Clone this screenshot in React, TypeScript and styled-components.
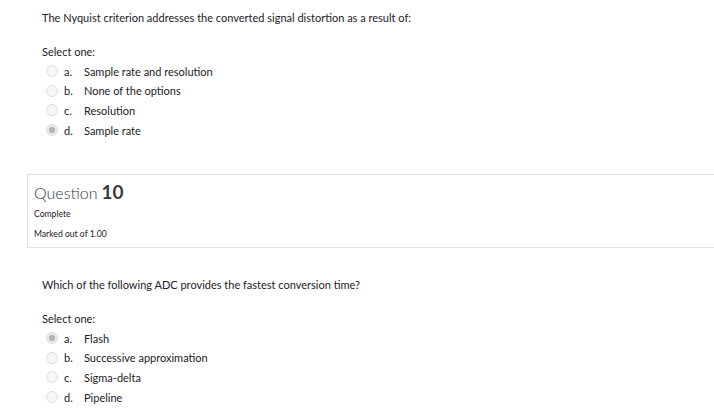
import React from "react";
import styled, { createGlobalStyle } from "styled-components";

const Global = createGlobalStyle`
  html, body { margin: 0; padding: 0; background: #fff; }
  body { font-family: Lato, "Open Sans", sans-serif; color: #1d2125; }
  * { box-sizing: border-box; }
`;

const Page = styled.div`
  display: flex;
  flex-direction: column;
  width: 714px;
  height: 415px;
  overflow: hidden;
`;

const QuestionBlock = styled.div<{ $top: number }>`
  display: flex;
  flex-direction: column;
  padding: ${(p) => p.$top}px 0 0 42px;
`;

const Prompt = styled.div`
  font-size: 11px;
  line-height: 14px;
  margin-bottom: 20px;
`;

const SelectLabel = styled.div`
  font-size: 11px;
  line-height: 14px;
  margin-bottom: 5px;
`;

const Options = styled.div`
  display: flex;
  flex-direction: column;
  gap: 5.7px;
  padding-left: 4px;
`;

const Option = styled.div`
  display: flex;
  align-items: center;
  height: 14px;
  font-size: 11px;
`;

const Radio = styled.span<{ $checked?: boolean }>`
  width: 12px;
  height: 12px;
  border-radius: 50%;
  border: 1px solid #dcdfe2;
  background: ${(p) => (p.$checked ? "radial-gradient(circle, #b4b7ba 0 3px, #e8e9ea 3.5px)" : "#f5f6f7")};
  margin-right: 6px;
  flex: none;
`;

const Letter = styled.span`
  width: 20px;
`;

const InfoBox = styled.div`
  margin: 0 0 0 27px;
  height: 74px;
  border: 1px solid #dee2e6;
  border-right: none;
  padding: 6px 6px;
  display: flex;
  flex-direction: column;
`;

const QTitle = styled.div`
  font-size: 16px;
  font-weight: 300;
  line-height: 22px;
  color: #343a40;
  display: flex;
  align-items: baseline;
  gap: 4px;
`;

const QNum = styled.span`
  font-size: 19px;
  font-weight: 700;
`;

const Meta = styled.div`
  font-size: 8.6px;
  line-height: 11px;
  margin-top: 5px;
  color: #1d2125;
`;

const Meta2 = styled(Meta)`
  margin-top: 9px;
`;

const Spacer = styled.div<{ $h: number }>`
  height: ${(p) => p.$h}px;
  flex: none;
`;

type Q = { prompt: string; options: string[]; checked: number };

const q1: Q = {
  prompt: "The Nyquist criterion addresses the converted signal distortion as a result of:",
  options: ["Sample rate and resolution", "None of the options", "Resolution", "Sample rate"],
  checked: 3,
};
const q2: Q = {
  prompt: "Which of the following ADC provides the fastest conversion time?",
  options: ["Flash", "Successive approximation", "Sigma-delta", "Pipeline"],
  checked: 0,
};

const letters = ["a.", "b.", "c.", "d."];

function Question({ q, top }: { q: Q; top: number }) {
  return (
    <QuestionBlock $top={top}>
      <Prompt>{q.prompt}</Prompt>
      <SelectLabel>Select one:</SelectLabel>
      <Options>
        {q.options.map((o, i) => (
          <Option key={o}>
            <Radio $checked={i === q.checked} />
            <Letter>{letters[i]}</Letter>
            <span>{o}</span>
          </Option>
        ))}
      </Options>
    </QuestionBlock>
  );
}

export default function App() {
  return (
    <Page>
      <Global />
      <Question q={q1} top={11} />
      <Spacer $h={37} />
      <InfoBox>
        <QTitle>
          Question <QNum>10</QNum>
        </QTitle>
        <Meta>Complete</Meta>
        <Meta2>Marked out of 1.00</Meta2>
      </InfoBox>
      <Question q={q2} top={30} />
    </Page>
  );
}
